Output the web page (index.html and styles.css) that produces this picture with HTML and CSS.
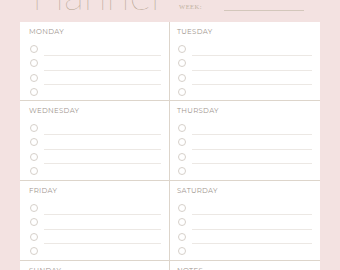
FILE: index.html
```html
<!DOCTYPE html>
<html>
<head>
<meta charset="utf-8">
<link rel="stylesheet" href="styles.css">
</head>
<body>
<div class="page">
  <header class="header">
    <h1 class="title">Planner</h1>
    <span class="week">WEEK:</span>
    <span class="week-line"></span>
  </header>
  <main class="card">
    <section class="cell">
      <h2 class="day">MONDAY</h2>
      <ul class="tasks"><li class="task"><i class="dot"></i><span class="rule"></span></li><li class="task"><i class="dot"></i><span class="rule"></span></li><li class="task"><i class="dot"></i><span class="rule"></span></li><li class="task"><i class="dot"></i><span class="rule last"></span></li></ul>
    </section>
    <section class="cell right">
      <h2 class="day">TUESDAY</h2>
      <ul class="tasks"><li class="task"><i class="dot"></i><span class="rule"></span></li><li class="task"><i class="dot"></i><span class="rule"></span></li><li class="task"><i class="dot"></i><span class="rule"></span></li><li class="task"><i class="dot"></i><span class="rule last"></span></li></ul>
    </section>
    <section class="cell">
      <h2 class="day">WEDNESDAY</h2>
      <ul class="tasks"><li class="task"><i class="dot"></i><span class="rule"></span></li><li class="task"><i class="dot"></i><span class="rule"></span></li><li class="task"><i class="dot"></i><span class="rule"></span></li><li class="task"><i class="dot"></i><span class="rule last"></span></li></ul>
    </section>
    <section class="cell right">
      <h2 class="day">THURSDAY</h2>
      <ul class="tasks"><li class="task"><i class="dot"></i><span class="rule"></span></li><li class="task"><i class="dot"></i><span class="rule"></span></li><li class="task"><i class="dot"></i><span class="rule"></span></li><li class="task"><i class="dot"></i><span class="rule last"></span></li></ul>
    </section>
    <section class="cell">
      <h2 class="day">FRIDAY</h2>
      <ul class="tasks"><li class="task"><i class="dot"></i><span class="rule"></span></li><li class="task"><i class="dot"></i><span class="rule"></span></li><li class="task"><i class="dot"></i><span class="rule"></span></li><li class="task"><i class="dot"></i><span class="rule last"></span></li></ul>
    </section>
    <section class="cell right">
      <h2 class="day">SATURDAY</h2>
      <ul class="tasks"><li class="task"><i class="dot"></i><span class="rule"></span></li><li class="task"><i class="dot"></i><span class="rule"></span></li><li class="task"><i class="dot"></i><span class="rule"></span></li><li class="task"><i class="dot"></i><span class="rule last"></span></li></ul>
    </section>
    <section class="cell">
      <h2 class="day">SUNDAY</h2>
    </section>
    <section class="cell right">
      <h2 class="day">NOTES</h2>
    </section>
  </main>
</div>
</body>
</html>
```
FILE: styles.css
```css
html, body {
  margin: 0;
  padding: 0;
  background: #f3e2e1;
  overflow: hidden;
}
.page {
  width: 340px;
  height: 270px;
  overflow: hidden;
}
.header {
  height: 22px;
  display: flex;
  align-items: flex-start;
  overflow: hidden;
}
.title {
  flex: none;
  width: 146px;
  margin: -27px 0 0 32px;
  font-family: "Lato", sans-serif;
  font-weight: 100;
  font-size: 42px;
  line-height: 42px;
  letter-spacing: 0;
  color: #b09d88;
  white-space: nowrap;
}
.week {
  flex: none;
  width: 26px;
  margin: 3px 0 0 1px;
  font-family: "Liberation Serif", serif;
  font-size: 6.5px;
  line-height: 8px;
  letter-spacing: 0.5px;
  color: #c2b2a2;
}
.week-line {
  flex: none;
  margin: 10px 0 0 19px;
  width: 80px;
  height: 1px;
  background: #d3c7bb;
}
.card {
  margin-left: 20px;
  width: 300px;
  background: #ffffff;
  display: grid;
  grid-template-columns: 149px 151px;
  grid-template-rows: 79px 80px 80px 80px;
}
.cell {
  border-bottom: 1px solid #ddd5cb;
  box-sizing: border-box;
  padding: 6px 0 0 9px;
}
.cell.right {
  border-left: 1px solid #ddd5cb;
  padding-left: 7px;
}
.day {
  margin: 0;
  font-family: "Montserrat", "Noto Sans", sans-serif;
  font-weight: 400;
  font-size: 7px;
  line-height: 8px;
  letter-spacing: 0.3px;
  color: #9e948e;
}
.tasks {
  list-style: none;
  margin: 5.5px 0 0 0;
  padding: 0;
}
.task {
  display: flex;
  height: 14.5px;
  align-items: center;
}
.dot {
  flex: none;
  width: 6px;
  height: 6px;
  border: 0.8px solid #d6d0ca;
  border-radius: 50%;
  margin-left: 1px;
}
.rule {
  align-self: stretch;
  flex: 1;
  margin: 0 8px 0 6px;
  border-bottom: 1px solid #ece8e4;
}
.rule.last {
  border-bottom: none;
}
```
